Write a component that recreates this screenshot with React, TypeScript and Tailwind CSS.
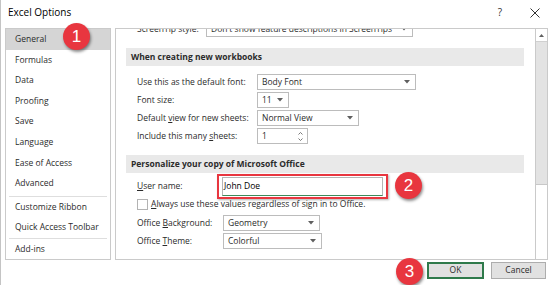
import React from "react";

const navTop = ["General", "Formulas", "Data", "Proofing", "Save", "Language", "Ease of Access", "Advanced"];
const navMid = ["Customize Ribbon", "Quick Access Toolbar"];

function Caret() {
  return (
    <svg width="6" height="4" viewBox="0 0 6 4" className="shrink-0">
      <path d="M0 0 L6 0 L3 3.5 Z" fill="#5f5f5f" />
    </svg>
  );
}

function Combo({ w, text }: { w: string; text: string }) {
  return (
    <div className={`${w} h-[16px] border border-[#bcbcbc] bg-white flex items-center justify-between pl-[4px] pr-[5px] overflow-hidden whitespace-nowrap`}>
      <span>{text}</span>
      <Caret />
    </div>
  );
}

function Badge({ n, cls }: { n: string; cls: string }) {
  return (
    <div
      className={`absolute ${cls} w-[27px] h-[27px] rounded-full bg-[#e8363f] text-white flex items-center justify-center text-[17px] font-['Liberation_Sans',sans-serif] shadow-[1px_2px_3px_rgba(0,0,0,0.45)]`}
    >
      {n}
    </div>
  );
}

export default function App() {
  return (
    <div className="relative w-[550px] h-[285px] overflow-hidden bg-white border-l border-[#c4c4c4] font-['Open_Sans',sans-serif] text-[8.5px] leading-none text-[#2b2b2b]">
      {/* title bar */}
      <div className="h-[28px] flex items-start pt-[7px] pl-[7px] pr-[10px]">
        <span className="text-[10px] text-black">Excel Options</span>
        <span className="ml-auto text-[10px] text-[#333] mr-[28px]">?</span>
        <svg width="10" height="10" viewBox="0 0 10 10" className="mt-[1px]">
          <path d="M0.5 0.5 L9.5 9.5 M9.5 0.5 L0.5 9.5" stroke="#333" strokeWidth="1" />
        </svg>
      </div>

      <div className="flex pl-[4px]">
        {/* left nav */}
        <div className="w-[106px] h-[232px] border border-[#cacaca] flex flex-col">
          {navTop.map((item, i) => (
            <div
              key={item}
              className={`h-[20.6px] shrink-0 flex items-center pl-[9px] ${i === 0 ? "bg-[#d5d5d5]" : ""}`}
            >
              {item}
            </div>
          ))}
          <div className="h-px mx-[3px] mt-[2px] bg-[#dedede]" />
          {navMid.map((item) => (
            <div key={item} className="h-[20.6px] shrink-0 flex items-center pl-[9px]">
              {item}
            </div>
          ))}
          <div className="h-px mx-[3px] bg-[#dedede]" />
          <div className="h-[20.6px] flex items-center pl-[9px]">Add-ins</div>
        </div>

        {/* right panel */}
        <div className="ml-[4px] w-[433px] h-[232px] border border-[#cacaca] flex">
          <div className="flex-1 overflow-hidden">
            {/* screentip row (scrolled, partly hidden) */}
            <div className="-mt-[8px] h-[16px] flex items-center pl-[21px]">
              <span className="w-[69px]">ScreenTip style:</span>
              <Combo w="w-[207px]" text="Don't show feature descriptions in ScreenTips" />
            </div>

            <div className="mt-[11px] ml-[10px] w-[398px] h-[18px] bg-[#e9e9e9] flex items-center pl-[5px] font-bold">
              When creating new workbooks
            </div>

            <div className="mt-[8px] h-[16px] flex items-center pl-[21px]">
              <span className="w-[120px]">Use this as the default font:</span>
              <Combo w="w-[159px]" text="Body Font" />
            </div>
            <div className="mt-[2px] h-[16px] flex items-center pl-[21px]">
              <span className="w-[120px]">Font size:</span>
              <Combo w="w-[32px]" text="11" />
            </div>
            <div className="mt-[2px] h-[16px] flex items-center pl-[21px]">
              <span className="w-[120px]">
                Default <span className="underline">v</span>iew for new sheets:
              </span>
              <Combo w="w-[102px]" text="Normal View" />
            </div>
            <div className="mt-[2px] h-[16px] flex items-center pl-[21px]">
              <span className="w-[120px]">
                Include this many <span className="underline">s</span>heets:
              </span>
              <div className="w-[51px] h-[16px] border border-[#bcbcbc] flex items-center justify-between pl-[4px] pr-[4px]">
                <span>1</span>
                <svg width="5" height="11" viewBox="0 0 5 11">
                  <path d="M0.5 3.5 L2.5 1.5 L4.5 3.5 M0.5 7.5 L2.5 9.5 L4.5 7.5" stroke="#6a6a6a" strokeWidth="0.9" fill="none" />
                </svg>
              </div>
            </div>

            <div className="mt-[11px] ml-[10px] w-[398px] h-[18px] bg-[#e9e9e9] flex items-center pl-[5px] font-bold">
              Personalize your copy of Microsoft Office
            </div>

            <div className="mt-[1px] h-[25px] flex items-center pl-[21px]">
              <span className="w-[80px]">
                <span className="underline">U</span>ser name:
              </span>
              <div className="w-[171px] h-[25px] border-2 border-[#e8363f] px-[3px] py-[1px] shadow-[1px_1px_2px_rgba(0,0,0,0.3)]">
                <div className="h-[19px] border border-[#b5b5b5] border-b-[#3f8a5a] flex items-center pl-[1px] text-black">
                  John Doe
                </div>
              </div>
            </div>

            <div className="h-[11px] flex items-center pl-[21px]">
              <div className="w-[11px] h-[11px] border border-[#b3b3b3] bg-white" />
              <span className="ml-[3px]">
                <span className="underline">A</span>lways use these values regardless of sign in to Office.
              </span>
            </div>

            <div className="mt-[5px] h-[16px] flex items-center pl-[21px]">
              <span className="w-[86px]">
                Office <span className="underline">B</span>ackground:
              </span>
              <Combo w="w-[97px]" text="Geometry" />
            </div>
            <div className="mt-[2px] h-[16px] flex items-center pl-[21px]">
              <span className="w-[86px]">
                Office <span className="underline">T</span>heme:
              </span>
              <Combo w="w-[99px]" text="Colorful" />
            </div>
          </div>

          {/* scrollbar */}
          <div className="w-[12px] border-l border-[#cacaca] flex flex-col">
            <div className="h-[13px] flex items-center justify-center bg-white border-b border-[#d0d0d0]">
              <svg width="5" height="3" viewBox="0 0 5 3">
                <path d="M0 3 L5 3 L2.5 0 Z" fill="#606060" />
              </svg>
            </div>
            <div className="h-[142px] bg-[#e3e3e3]" />
            <div className="flex-1 bg-white border-t border-[#c8c8c8]" />
          </div>
        </div>
      </div>

      {/* buttons */}
      <div className="mt-[2px] flex justify-end gap-[7px] pr-[4px]">
        <button className="w-[57px] h-[17px] bg-[#e1e1e1] border-2 border-[#2f7a4b] flex items-center justify-center">
          OK
        </button>
        <button className="w-[55px] h-[17px] bg-[#e1e1e1] border border-[#adadad] flex items-center justify-center">
          Cancel
        </button>
      </div>

      <Badge n="1" cls="left-[62px] top-[23px]" />
      <Badge n="2" cls="left-[394px] top-[172px]" />
      <Badge n="3" cls="left-[395px] top-[258px]" />
    </div>
  );
}
